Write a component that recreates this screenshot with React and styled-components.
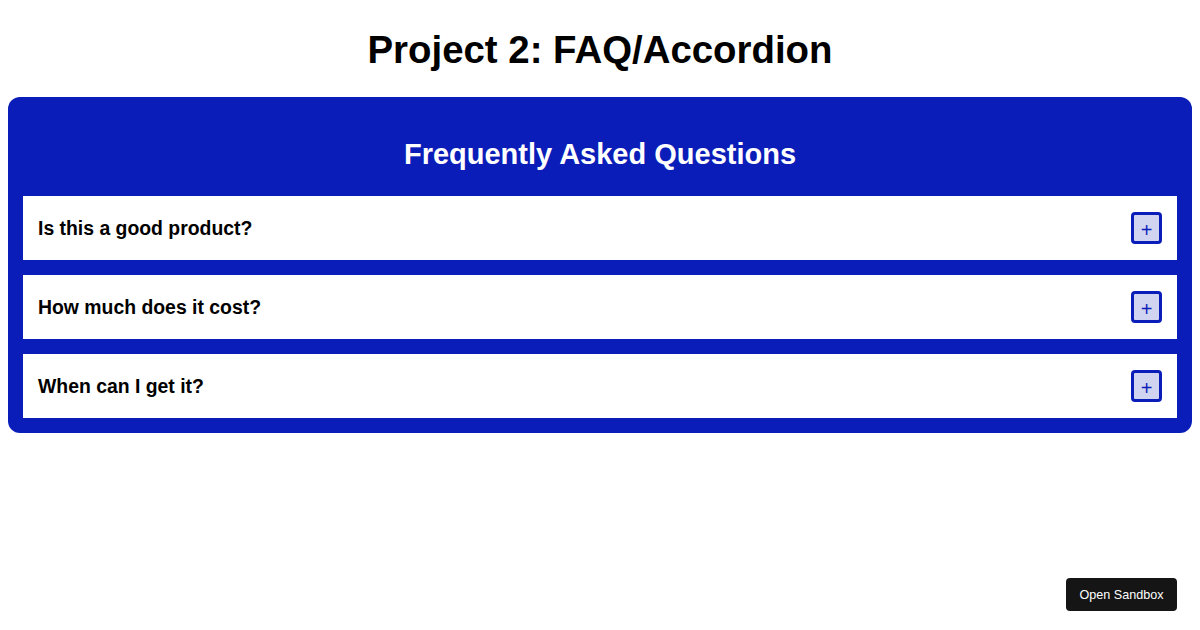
import { useState } from 'react';
import styled, { createGlobalStyle } from 'styled-components';

const GlobalStyle = createGlobalStyle`
  body {
    margin: 8px;
    font-family: "Liberation Sans", Arial, sans-serif;
    background: #fff;
    color: #000;
  }
`;

const faqs = [
  { q: 'Is this a good product?', a: 'Yes, it is a great product.' },
  { q: 'How much does it cost?', a: 'It costs $39.99.' },
  { q: 'When can I get it?', a: 'You can get it within 2 days.' },
];

const App = () => {
  const [open, setOpen] = useState(null);

  return (
    <>
      <GlobalStyle />
      <PageTitle>Project 2: FAQ/Accordion</PageTitle>
      <Panel>
        <Heading>Frequently Asked Questions</Heading>
        <List>
          {faqs.map((item, i) => (
            <Item key={item.q}>
              <Row>
                <Question>{item.q}</Question>
                <ToggleButton onClick={() => setOpen(open === i ? null : i)}>
                  {open === i ? '−' : '+'}
                </ToggleButton>
              </Row>
              {open === i && <Answer>{item.a}</Answer>}
            </Item>
          ))}
        </List>
      </Panel>
      <SandboxButton>Open Sandbox</SandboxButton>
    </>
  );
};

const PageTitle = styled.h1`
  font-size: 38.4px;
  font-weight: 700;
  text-align: center;
  margin: 20px 0 25px;
  line-height: 44px;
`;

const Panel = styled.section`
  background: #0b1db9;
  border-radius: 12px;
  padding: 15px;
`;

const Heading = styled.h2`
  color: #fff;
  font-size: 29px;
  font-weight: 700;
  text-align: center;
  line-height: 32px;
  margin: 26px 0 26px;
`;

const List = styled.div`
  display: flex;
  flex-direction: column;
  gap: 15px;
`;

const Item = styled.div`
  background: #fff;
`;

const Row = styled.div`
  display: flex;
  align-items: center;
  justify-content: space-between;
  height: 64px;
  padding: 0 15px;
`;

const Question = styled.h3`
  margin: 0;
  font-size: 19.4px;
  font-weight: 700;
`;

const ToggleButton = styled.button`
  width: 31px;
  height: 32px;
  padding: 3px 0 0;
  border: 3px solid #0b1db9;
  border-radius: 4px;
  background: #d1d4f1;
  color: #0b1db9;
  font-family: "Liberation Sans", Arial, sans-serif;
  font-size: 20px;
  line-height: 1;
  display: flex;
  align-items: center;
  justify-content: center;
  cursor: pointer;
`;

const Answer = styled.p`
  margin: 0;
  padding: 0 15px 20px;
  font-size: 16px;
`;

const SandboxButton = styled.button`
  position: fixed;
  right: 23px;
  bottom: 19px;
  height: 33px;
  padding: 0 13.5px;
  border: none;
  border-radius: 4px;
  background: #151515;
  color: #fff;
  font-family: "Liberation Sans", Arial, sans-serif;
  font-size: 12.6px;
  cursor: pointer;
`;

export default App;
